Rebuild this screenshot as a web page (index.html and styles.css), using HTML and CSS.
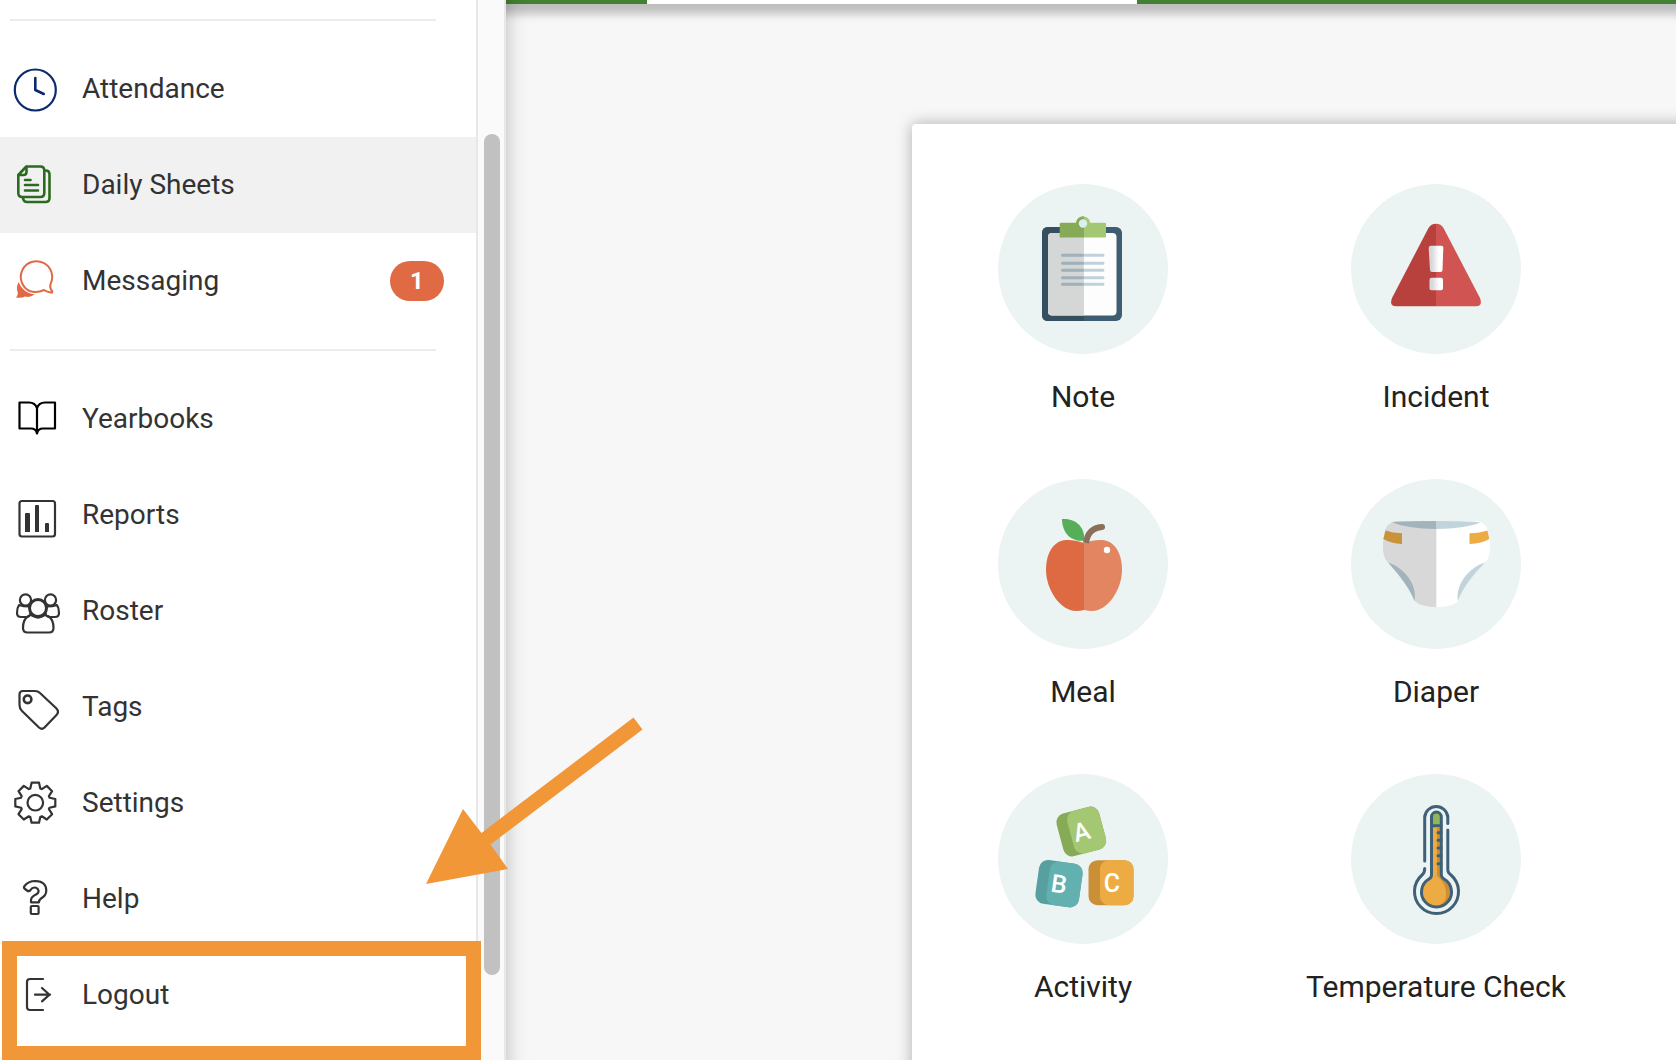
FILE: index.html
```html
<!DOCTYPE html>
<html lang="en">
  <head>
    <meta charset="UTF-8" />
    <meta name="viewport" content="width=device-width, initial-scale=1" />
    <title>Daily Sheets</title>
    <link rel="stylesheet" href="styles.css">
  </head>
  <body>
    <div class="app">
      <aside class="sidebar">
        <nav class="menu" aria-label="Main menu">
          <hr />
          <ul>
            <li>
              <a class="menu-item" href="#attendance">
                <svg class="icon navy" viewBox="0 0 48 48" aria-hidden="true">
                  <circle cx="25.3" cy="25" r="20.5" />
                  <path d="M25.3 13v12l8.5 4" stroke-width="2.6" />
                </svg>
                <span class="label">Attendance</span>
              </a>
            </li>
            <li>
              <a class="menu-item active" href="#daily-sheets" aria-current="page">
                <svg class="icon green" viewBox="0 0 48 48" aria-hidden="true">
                  <path d="M8.3 14l8-8.500h14q4 0 4 4v22.500q0 4-4 4h-18q-4 0-4-4z" />
                  <path d="M16.500 6v5q0 3-3 3H8.500M35.500 9.500q4 0 4 4v23.500q0 4-4 4H17q-3.500 0-4-4" />
                  <path d="M15 19h5.500M15 24h13M15 29.500h13" />
                </svg>
                <span class="label">Daily Sheets</span>
              </a>
            </li>
            <li>
              <a class="menu-item" href="#messaging">
                <svg class="icon orange" viewBox="0 0 48 48" aria-hidden="true">
                  <path stroke-width="2" d="M34 33Q27 36.500 19.500 34A15.700 15.700 0 1 1 40.500 27Q39.500 31 42 34Q43 36 41 35.500Q37 35 34 33z" />
                  <path class="solid" d="M8.500 25Q6.500 29 7 33Q9 37 6 40.500Q12 41.500 15 39.500Q20 41 24.500 37.500Q13 36 8.500 25z" />
                </svg>
                <span class="label">Messaging</span>
                <span class="badge">1</span>
              </a>
            </li>
          </ul>
          <hr />
          <ul>
            <li>
              <a class="menu-item" href="#yearbooks">
                <svg class="icon black" viewBox="0 0 48 48" aria-hidden="true">
                  <path d="M27 38V13Q25 7.500 19 7.500H9.500v26h11.500q5 0 6 5q1-5 6-5h12v-26H35q-6 0-8 5.500" />
                </svg>
                <span class="label">Yearbooks</span>
              </a>
            </li>
            <li>
              <a class="menu-item" href="#reports">
                <svg class="icon" viewBox="0 0 48 48" aria-hidden="true">
                  <rect x="9.500" y="10" width="35.500" height="35.500" rx="2.500" />
                  <path class="solid" d="M15 23q0-1 1-1h3q1 0 1 1v18h-5zM25 15q0-1 1-1h2q1 0 1 1v26h-4zM35 33q0-1 1-1h2q1 0 1 1v8h-4z" />
                </svg>
                <span class="label">Reports</span>
              </a>
            </li>
            <li>
              <a class="menu-item" href="#roster">
                <svg class="icon" viewBox="0 0 48 48" aria-hidden="true">
                  <circle cx="15.500" cy="13" r="5.600" />
                  <circle cx="40.500" cy="13" r="5.600" />
                  <circle cx="28" cy="21" r="8.500" stroke-width="3" />
                  <path d="M19 19.500q-6 0-10-1.500q-2 3-2 8q0 4 4 4h5.500q2 0 4-2M37 19.500q6 0 10-1.500q2 3 2 8q0 4-4 4h-5.500q-2 0-4-2" />
                  <path d="M18.500 29q-5.500 3-5.500 12q0 4.500 4.500 4.500h21.500q4.500 0 4.500-4.500q0-9-5.500-12M20 27q8 7 16 0" />
                </svg>
                <span class="label">Roster</span>
              </a>
            </li>
            <li>
              <a class="menu-item" href="#tags">
                <svg class="icon" viewBox="0 0 48 48" aria-hidden="true">
                  <path d="M13 8h12q3 0 5 2l16.500 15.500q3 3.500 0 6.500l-12 12.500q-2.500 2.500-5.500 0L12 28q-2.500-2.500-2.500-6V11.500Q9.500 8 13 8z" />
                  <circle cx="17.600" cy="16.300" r="3.800" stroke-width="2.600" />
                </svg>
                <span class="label">Tags</span>
              </a>
            </li>
            <li>
              <a class="menu-item" href="#settings">
                <svg class="icon" viewBox="0 0 48 48" aria-hidden="true">
                  <g transform="translate(25.300 23.700)">
                    <path d="M-5-14.200L-3.700-20H3.700L5-14.200L6.500-13.600L11.500-16.800L16.800-11.500L13.600-6.500L14.200-5L20-3.700V3.700L14.200 5L13.600 6.500L16.800 11.500L11.500 16.800L6.500 13.600L5 14.200L3.700 20H-3.700L-5 14.200L-6.500 13.600L-11.500 16.800L-16.800 11.500L-13.600 6.500L-14.200 5L-20 3.700V-3.700L-14.200-5L-13.600-6.500L-16.800-11.500L-11.500-16.800L-6.500-13.600z" />
                    <circle r="7.800" />
                  </g>
                </svg>
                <span class="label">Settings</span>
              </a>
            </li>
            <li>
              <a class="menu-item" href="#help">
                <svg class="icon" viewBox="0 0 48 48" aria-hidden="true">
                  <path d="M14.200 11.500Q18 6 25.500 6Q36.300 6.500 36.300 15.500Q36.300 20.500 31 23.500Q29 25 29 27.300H21V25Q21 22 26 19.500Q29 18 28.500 15.500Q27.500 12.500 24.500 12.500Q22 12.500 20.500 15Q19 17 17 15.500L15 14Q13.500 13 14.200 11.500z" />
                  <rect x="20.800" y="31" width="7.800" height="8" rx="1" />
                </svg>
                <span class="label">Help</span>
              </a>
            </li>
            <li class="highlighted">
              <a class="menu-item" href="#logout">
                <svg class="icon" viewBox="0 0 48 48" aria-hidden="true">
                  <path d="M33 8H20q-3 0-3 3v25q0 3 3 3h13M25 23.700h15M32 17l7.500 6.700L32 30.300" />
                </svg>
                <span class="label">Logout</span>
              </a>
              <svg class="pointer" viewBox="0 0 217 167" aria-hidden="true">
                <path d="M0 167L37 92L55.500 116L207.500 0.500L216.500 12.500L64.500 127.500L82 152z" />
              </svg>
            </li>
          </ul>
        </nav>
        <div class="scroll-track" aria-hidden="true">
          <div class="scroll-thumb"></div>
        </div>
      </aside>

      <main class="content">
        <header class="topbar">
          <div class="topbar-tab"></div>
        </header>

        <section class="card" aria-label="Daily sheet entries">
          <a class="tile" href="#note">
            <svg viewBox="0 0 170 170" aria-hidden="true">
              <rect x="44" y="43" width="80" height="94" rx="6" fill="#3f5d70" />
              <path d="M86 43H50q-6 0-6 6v82q0 6 6 6h36z" fill="#344f60" />
              <rect x="50" y="49" width="68.500" height="82.500" rx="4" fill="#fdfdfd" />
              <path d="M86 49H54q-4 0-4 4v74.500q0 4 4 4h32z" fill="#d5d6d6" />
              <path d="M86 38.700V53.500h21q1 0 1-1V40q0-1.300-1-1.300H92A7 7 0 0 0 86 32.400z" fill="#a3c773" />
              <path d="M86 32.300A7 7 0 0 0 78 38.700H63q-1.300 0-1.300 1.300v12.500q0 1 1 1H86z" fill="#87aa56" />
              <circle cx="85" cy="39.500" r="4.200" fill="#dceef0" />
              <g stroke-width="3" stroke-linecap="round">
                <path d="M64.500 71.300H105M64.500 79.300H105M64.500 86.300H105M64.500 93.700H105M64.500 100.300H105" stroke="#c0d1da" />
                <path d="M64.500 71.300H84.500M64.500 79.300H84.500M64.500 86.300H84.500M64.500 93.700H84.500M64.500 100.300H84.500" stroke="#a1b1b9" />
              </g>
            </svg>
            <span>Note</span>
          </a>

          <a class="tile" href="#incident">
            <svg viewBox="0 0 170 170" aria-hidden="true">
              <defs>
                <linearGradient id="mark">
                  <stop offset="0.2" stop-color="#d8d8d8" />
                  <stop offset="0.7" stop-color="#fff" />
                </linearGradient>
              </defs>
              <path d="M85 39.700Q80 39.700 77.500 44L41 114Q38 122.300 45 122.300H85z" fill="#b9413d" />
              <path d="M85 39.700Q90 39.700 92.500 44L129 114Q132 122.300 125 122.300H85z" fill="#d05552" />
              <path d="M80 61.700H90.500Q92.500 61.700 92.300 64L91.500 86Q91.500 88 89.500 88H81Q79 88 79 86L77.700 64Q77.700 61.700 80 61.700z" fill="url(#mark)" />
              <rect x="78.500" y="93.700" width="13.500" height="12.600" rx="2" fill="url(#mark)" />
            </svg>
            <span>Incident</span>
          </a>

          <a class="tile" href="#meal">
            <svg viewBox="0 0 170 170" aria-hidden="true">
              <path d="M86 64Q76 60.500 68 61C54 62 48 76 48 91C48 110 62 132 78 132Q82 132 86 131z" fill="#de6a43" />
              <path d="M86 64Q96 60.500 104 61C118 62 124 76 124 91C124 110 110 132 94 132Q90 132 86 131z" fill="#e48562" />
              <path d="M64 40C79 39 87 49 86.300 61.700C72 63 64 53 64 40z" fill="#57ae58" />
              <path d="M88 64Q90 49 104 48" fill="none" stroke="#8c6f5a" stroke-width="6" />
              <circle cx="104" cy="48" r="3" fill="#8c6f5a" />
              <circle cx="109" cy="71" r="3.200" fill="#fff" />
            </svg>
            <span>Meal</span>
          </a>

          <a class="tile" href="#diaper">
            <svg viewBox="0 0 170 170" aria-hidden="true">
              <path d="M85.500 42H44Q36 44 34 52L32 64Q31 78 37 83.500C52 94 62 105 63.500 122Q70 128 85.500 128.300z" fill="#d8d8d8" />
              <path d="M85.500 42H127Q135 44 137 52L139 64Q140 78 134 83.500C119 94 109 105 107.500 122Q101 128 85.500 128.300z" fill="#fff" />
              <path d="M41 43.500Q50 42 85.500 42V50Q58 50 41 43.500z" fill="#a2b3bb" />
              <path d="M130 43.500Q121 42 85.500 42V50Q113 50 130 43.500z" fill="#c1d3db" />
              <path d="M37 83.500C52 88 67 105 63.500 122C58 108 48 96 37 83.500z" fill="#a2b3bb" />
              <path d="M134 83.500C119 88 104 105 107 122C112 108 122 96 134 83.500z" fill="#c1d3db" />
              <path d="M34.500 51.500Q42 54 51 54.300V65Q40 64.500 32.300 60z" fill="#cb9337" />
              <path d="M136.500 51.500Q129 54 118.500 54.300V65Q131 64.500 138.300 60z" fill="#edab43" />
            </svg>
            <span>Diaper</span>
          </a>

          <a class="tile" href="#activity">
            <svg class="blocks" viewBox="0 0 170 170" aria-hidden="true">
              <g transform="translate(83.300 57.500) rotate(-15)">
                <rect x="-22" y="-22" width="44" height="44" rx="9" fill="#87aa56" />
                <rect x="-11" y="-22" width="33" height="44" rx="9" fill="#a3c773" />
                <text x="0" y="9">A</text>
              </g>
              <g transform="translate(61 109.700) rotate(8)">
                <rect x="-22" y="-22" width="44" height="44" rx="9" fill="#589fa0" />
                <rect x="-11" y="-22" width="33" height="44" rx="9" fill="#63b0b1" />
                <text x="0" y="9">B</text>
              </g>
              <g transform="translate(113 108.700)">
                <rect x="-22.500" y="-22.500" width="45" height="45" rx="9" fill="#cb9037" />
                <rect x="-11" y="-22.500" width="33.500" height="45" rx="9" fill="#edab43" />
                <text x="1" y="9">C</text>
              </g>
            </svg>
            <span>Activity</span>
          </a>

          <a class="tile" href="#temperature-check">
            <svg viewBox="0 0 170 170" aria-hidden="true">
              <path d="M80.500 44a4.900 4.900 0 0 1 9.800 0V101Q90.500 103.500 93 105A15 15 0 1 1 78 105Q80.500 103.500 80.500 101z" fill="#edab43" />
              <path d="M86 54V102Q98 112 94 126Q91 131 85 132Q99 132 100 118Q100 109 90 103V54z" fill="#cb9037" />
              <path d="M80.500 51.500V44a4.900 4.900 0 0 1 9.800 0v7.500z" fill="#8fb65c" />
              <g fill="none" stroke="#3f6075" stroke-width="3" stroke-linecap="round">
                <path d="M80.500 43a4.900 4.900 0 0 1 9.800 0V101Q90.500 103.500 93 105A15 15 0 1 1 78 105Q80.500 103.500 80.500 101z" />
                <path d="M73.700 87V43A11.600 11.600 0 0 1 96.800 43V49.500M96.800 56V96Q97 99 100 101A22 22 0 1 1 71 101Q73.700 99 73.700 94.500" />
                <path d="M81 51.700H90M87 58.700h3M87 66.300h3M87 74h3M87 81.700h3M87 89.700h3" />
              </g>
            </svg>
            <span>Temperature Check</span>
          </a>
        </section>
      </main>
    </div>
  </body>
</html>
```
FILE: styles.css
```css
:root {
  --text: #333;
  --text-strong: #222;
  --green: #428132;
  --orange: #e06a44;
  --highlight: #f19737;
  --line: #ececec;
  --bg: #f7f7f7;
}
* {
  box-sizing: border-box;
}
body {
  margin: 0;
  font-family: Roboto, "Liberation Sans", sans-serif;
  background: var(--bg);
  color: var(--text);
}
a {
  color: inherit;
  text-decoration: none;
}
.app {
  display: flex;
  height: 100vh;
  overflow: hidden;
}

/* Sidebar */
.sidebar {
  position: relative;
  z-index: 2;
  display: flex;
  flex: 0 0 506px;
  background: #fff;
  box-shadow: -20px 0 20px 20px rgb(0 0 0 / 0.25);
}
.menu {
  flex: 1;
  padding-top: 19px;
}
.menu hr {
  height: 2px;
  margin: 0 40px 20px 10px;
  border: none;
  background: var(--line);
}
.menu ul {
  margin: 0 0 20px;
  padding: 0;
  list-style: none;
}
.menu-item {
  display: flex;
  align-items: center;
  gap: 24px;
  height: 96px;
  padding: 0 32px 0 10px;
  font-size: 28px;
}
.menu-item:hover,
.menu-item.active {
  background: #f1f1f1;
}
.label {
  padding-bottom: 2px;
}
.icon {
  flex: none;
  width: 48px;
  height: 48px;
  overflow: visible;
  color: var(--text);
  fill: none;
  stroke: currentColor;
  stroke-width: 2.2;
  stroke-linecap: round;
  stroke-linejoin: round;
}
.icon .solid {
  fill: currentColor;
  stroke: none;
}
.icon.navy {
  color: #0b2a70;
}
.icon.green {
  color: #2c6b1f;
  stroke-width: 2.6;
}
.icon.orange {
  color: var(--orange);
}
.icon.black {
  color: #000;
}
.badge {
  width: 54px;
  margin-left: auto;
  border-radius: 20px;
  background: var(--orange);
  color: #fff;
  font-size: 24px;
  font-weight: 700;
  line-height: 40px;
  text-align: center;
}

/* Frame and arrow laid over the logout row */
.highlighted {
  position: relative;
}
.highlighted::after {
  content: "";
  position: absolute;
  inset: -6px -5px -18px 2px;
  z-index: 1;
  border: 15px solid var(--highlight);
  pointer-events: none;
}
.pointer {
  position: absolute;
  z-index: 1;
  top: -230px;
  left: 426px;
  width: 217px;
  height: 167px;
  fill: var(--highlight);
  pointer-events: none;
}

/* Scrollbar */
.scroll-track {
  display: flex;
  flex: 0 0 30px;
  padding: 134px 4px 85px 6px;
  border: solid #e8e8e8;
  border-width: 0 2px;
  background: #fafafa;
}
.scroll-thumb {
  flex: 1;
  border-radius: 8px;
  background: #c1c1c1;
}

/* Content */
.content {
  display: flex;
  flex: 1;
  flex-direction: column;
  min-width: 0;
}
.topbar {
  flex: none;
  height: 4px;
  padding-left: 141px;
  background: var(--green);
  box-shadow: 0 0 10px 10px rgb(0 0 0 / 0.23);
}
.topbar-tab {
  width: 490px;
  height: 100%;
  background: #fff;
}
/* runs past the right and bottom edges so its shadow stays even */
.card {
  flex: 1;
  display: grid;
  grid-template-columns: repeat(auto-fill, 302px);
  align-content: start;
  gap: 62px 51px;
  margin: 120px -20px -20px 406px;
  padding: 60px 20px;
  border-top-left-radius: 4px;
  background: #fff;
  box-shadow: 0 0 16px rgb(0 0 0 / 0.3);
}
.tile {
  display: flex;
  flex-direction: column;
  align-items: center;
  gap: 23px;
  color: var(--text-strong);
  font-size: 30px;
  line-height: 40px;
}
.tile svg {
  width: 170px;
  height: 170px;
  border-radius: 50%;
  background: #ebf4f3;
}
.blocks text {
  fill: #fff;
  font-size: 25px;
  font-weight: 500;
  text-anchor: middle;
}
```
